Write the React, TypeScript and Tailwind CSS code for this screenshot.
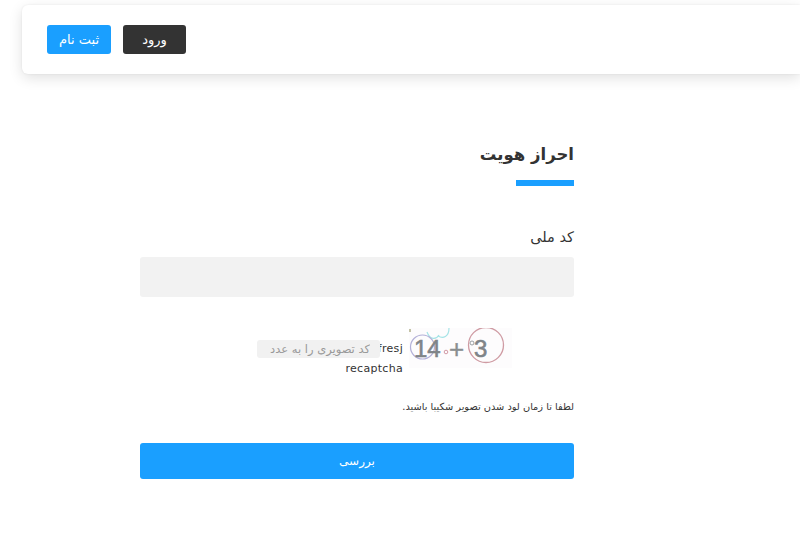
export default function App() {
  return (
    <div className="w-[800px] h-[533px] overflow-hidden bg-white font-['DejaVu_Sans','Noto_Sans',sans-serif] text-[#333]">
      <header className="ml-[22px] mt-[5px] h-[69px] flex items-center gap-3 pl-[25px] bg-white rounded-l-md shadow-[0_0_2px_rgba(0,0,0,0.08),0_4px_14px_rgba(0,0,0,0.12)]">
        <button className="w-16 h-[29px] rounded-[3px] bg-[#1a9fff] text-white text-[13px]">ثبت نام</button>
        <button className="w-[63px] h-[29px] rounded-[3px] bg-[#333] text-white text-[13px]">ورود</button>
      </header>

      <main dir="rtl" className="ml-[140px] w-[434px]">
        <h1 className="mt-[66px] h-[30px] text-[16.5px] leading-[30px] font-bold text-[#333]">احراز هویت</h1>
        <div className="mt-[10px] w-[58px] h-[6px] bg-[#1a9fff]" />

        <label className="block mt-[40px] text-[14.5px] leading-[22px] text-[#333]">کد ملی</label>
        <input className="block mt-[9px] w-full h-10 rounded-[3px] bg-[#f2f2f2] outline-none" />

        <div className="relative mt-[31px] h-10 flex items-center pr-[62px]">
          <svg direction="ltr" width="103" height="40" viewBox="0 0 103 40" className="shrink-0">
            <rect width="103" height="40" fill="#fdfcfd" />
            <path d="M1 1v3" stroke="#8a8a50" strokeWidth="1" />
            <path d="M18 4c3 8 9 8 12 3" fill="none" stroke="#a5e3e6" strokeWidth="1.2" />
            <path d="M29 8c5 3 11 1 11-8" fill="none" stroke="#a5e3e6" strokeWidth="1.2" />
            <circle cx="13.5" cy="19" r="12" fill="none" stroke="#b3b0d8" strokeWidth="1.2" />
            <circle cx="77" cy="17" r="17.5" fill="none" stroke="#cf9ba3" strokeWidth="1.3" />
            <circle cx="37" cy="24" r="1.8" fill="none" stroke="#d29aa6" strokeWidth="1" />
            <text x="5" y="29" fontSize="24" fill="#7f8488" stroke="#7f8488" strokeWidth="0.6" fontFamily="Liberation Sans">14</text>
            <text x="40" y="30" fontSize="26" fill="#8a8e90" stroke="#8a8e90" strokeWidth="0.4" fontFamily="Liberation Sans">+</text>
            <text x="65" y="29" fontSize="24" fill="#7f8488" stroke="#7f8488" strokeWidth="0.6" fontFamily="Liberation Sans">3</text>
            <circle cx="63" cy="15" r="2" fill="none" stroke="#9a9ea2" strokeWidth="1" />
          </svg>
          <div dir="ltr" className="self-start mt-[11px] mr-[6px] w-[60px] text-right text-[11px] leading-5 tracking-[0.3px] text-[#333] shrink-0">
            fresj recaptcha
          </div>
          <input
            placeholder="کد تصویری را به عدد"
            className="absolute left-[117px] top-[12px] w-[123px] h-[18px] px-[10px] rounded-[3px] bg-[#f1f1f1] text-[11.5px] text-right placeholder:text-[#999] outline-none"
          />
        </div>

        <p className="mt-[29px] text-[9.8px] leading-5 whitespace-nowrap text-[#333]">لطفا تا زمان لود شدن تصویر شکیبا باشید.</p>

        <button className="block mt-[26px] w-full h-9 rounded-[3px] bg-[#1a9fff] text-white text-[12px]">بررسی</button>
      </main>
    </div>
  )
}
